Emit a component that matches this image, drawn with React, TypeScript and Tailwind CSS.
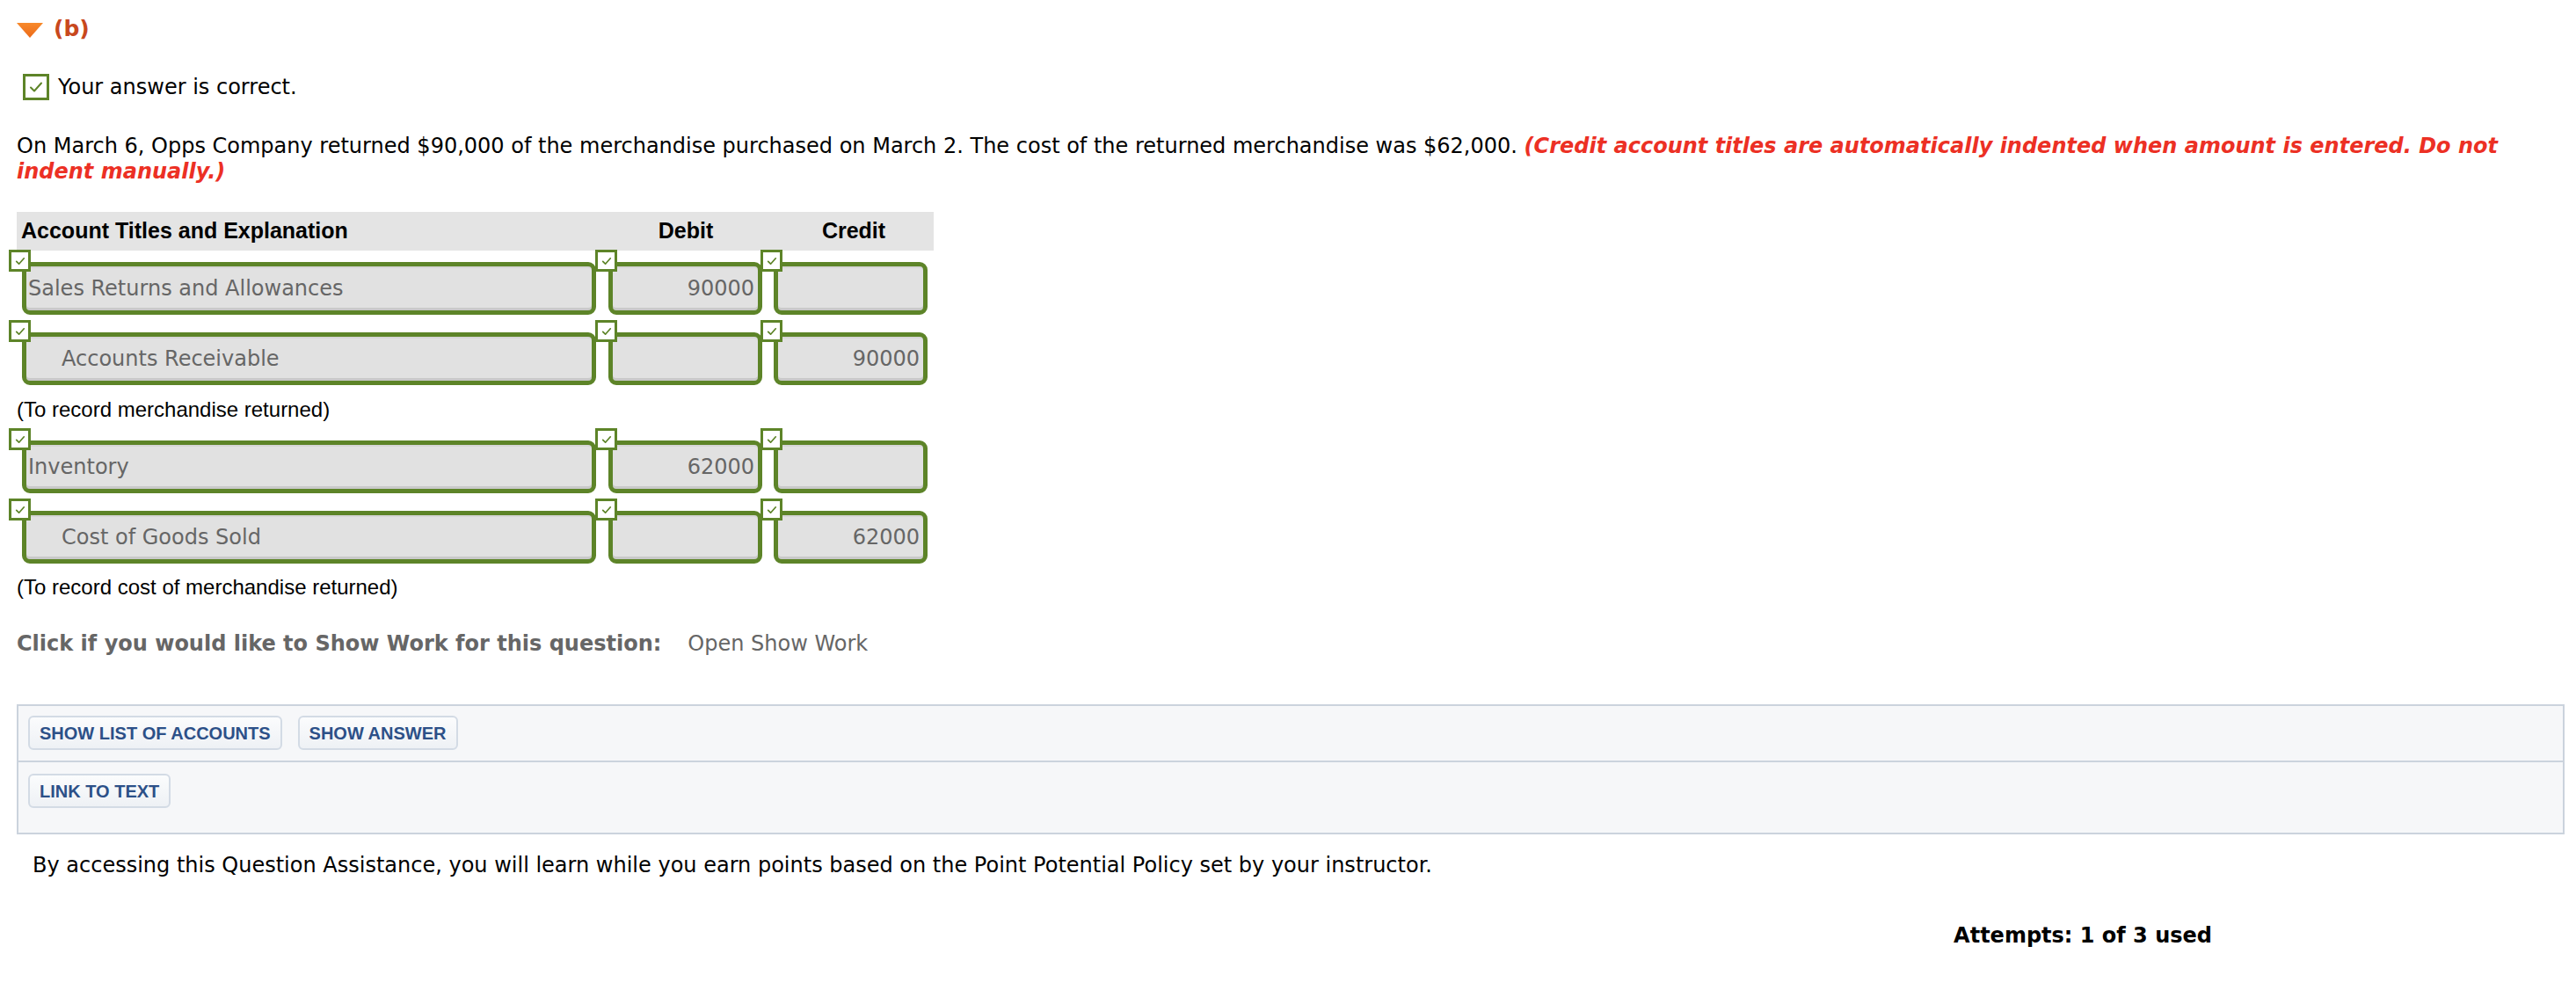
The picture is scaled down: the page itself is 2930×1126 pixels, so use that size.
import type { ReactNode } from "react";

const GREEN = "#5d8428";

function Check({ big = false }: { big?: boolean }) {
  return (
    <span
      className={
        big
          ? "flex h-[30px] w-[30px] items-center justify-center border-[3px] border-[#5d8428] bg-white"
          : "flex h-[25px] w-[25px] items-center justify-center border-[3px] border-[#5d8428] bg-white"
      }
    >
      <svg width={big ? 16 : 12} height={big ? 14 : 10} viewBox="0 0 16 14" fill="none">
        <path d="M2 7.5 L6 11.5 L14 2.5" stroke={GREEN} strokeWidth={big ? 2 : 2.4} strokeLinecap="round" strokeLinejoin="round" />
      </svg>
    </span>
  );
}

function Field({ width, children, align = "left", indent = false }: { width: string; children?: ReactNode; align?: "left" | "right"; indent?: boolean }) {
  return (
    <div className={`relative ${width}`}>
      <span className="absolute -left-[15px] -top-[14px] z-10">
        <Check />
      </span>
      <div
        className={`flex h-[60px] items-center rounded-[9px] border-[5px] border-[#5d8428] bg-[#e1e1e1] shadow-[inset_0_-3px_0_#c9c9c9,inset_0_2px_0_#d6d6d6] text-[24px] text-[#666] ${
          align === "right" ? "justify-end pr-[4px]" : indent ? "pl-[40px]" : "pl-[2px]"
        }`}
      >
        {children}
      </div>
    </div>
  );
}

function JournalRow({ account, debit, credit, first = false }: { account: string; debit?: string; credit?: string; first?: boolean }) {
  return (
    <div className={`flex pl-[6px] ${first ? "mt-[13px]" : "mt-[20px]"}`}>
      <Field width="w-[653px]" indent={!!credit}>
        {account}
      </Field>
      <div className="ml-[14px]">
        <Field width="w-[175px]" align="right">
          {debit}
        </Field>
      </div>
      <div className="ml-[13px]">
        <Field width="w-[175px]" align="right">
          {credit}
        </Field>
      </div>
    </div>
  );
}

function PanelButton({ children }: { children: ReactNode }) {
  return (
    <button className="h-[39px] rounded-[6px] border-2 border-[#d3dbe5] bg-gradient-to-b from-[#fbfcfd] to-[#eef1f5] px-[11px] font-['Liberation_Sans',sans-serif] text-[20px] font-bold text-[#2c5088]">
      {children}
    </button>
  );
}

export default function App() {
  return (
    <div className="min-h-screen bg-white pl-[19px] pr-[13px] pt-[18px] font-['DejaVu_Sans',sans-serif] text-black">
      <div className="flex h-[30px] items-center">
        <svg width="30" height="17" viewBox="0 0 30 17" className="mt-[2px]">
          <defs>
            <linearGradient id="tri" x1="0" y1="0" x2="0" y2="1">
              <stop offset="0" stopColor="#f7892a" />
              <stop offset="1" stopColor="#ec6a1a" />
            </linearGradient>
          </defs>
          <polygon points="0,0 30,0 15,17" fill="url(#tri)" />
        </svg>
        <span className="ml-[12px] text-[25px] font-bold text-[#c8481d]">(b)</span>
      </div>

      <div className="mt-[33px] flex items-center pl-[7px]">
        <Check big />
        <span className="ml-[10px] text-[24px]">Your answer is correct.</span>
      </div>

      <p className="mt-[35px] text-[24px] leading-[29px]">
        On March 6, Opps Company returned $90,000 of the merchandise purchased on March 2. The cost of the returned merchandise was $62,000.{" "}
        <span className="font-bold italic text-[#ec3024]">
          (Credit account titles are automatically indented when amount is entered. Do not indent manually.)
        </span>
      </p>

      <div className="mt-[31px] w-[1043px]">
        <div className="flex h-[44px] items-center bg-[#e4e4e4] font-['Liberation_Sans',sans-serif] text-[25px] font-bold">
          <div className="w-[661px] pl-[5px]">Account Titles and Explanation</div>
          <div className="w-[200px] text-center">Debit</div>
          <div className="w-[182px] text-center">Credit</div>
        </div>

        <JournalRow first account="Sales Returns and Allowances" debit="90000" />
        <JournalRow account="Accounts Receivable" credit="90000" />
        <div className="mt-[6px] h-[44px] font-['Liberation_Sans',sans-serif] text-[24px] leading-[44px]">(To record merchandise returned)</div>

        <JournalRow first account="Inventory" debit="62000" />
        <JournalRow account="Cost of Goods Sold" credit="62000" />
        <div className="mt-[6px] h-[42px] font-['Liberation_Sans',sans-serif] text-[24px] leading-[42px]">(To record cost of merchandise returned)</div>
      </div>

      <div className="mt-[28px] flex items-baseline leading-[30px]">
        <span className="text-[24px] font-bold text-[#666]">Click if you would like to Show Work for this question:</span>
        <span className="ml-[30px] text-[24px] text-[#666]">Open Show Work</span>
      </div>

      <div className="mt-[54px] border-2 border-[#cbd3dd] bg-[#f6f7f9]">
        <div className="flex gap-[18px] border-b-2 border-[#cbd3dd] px-[11px] pb-[12px] pt-[11px]">
          <PanelButton>SHOW LIST OF ACCOUNTS</PanelButton>
          <PanelButton>SHOW ANSWER</PanelButton>
        </div>
        <div className="px-[11px] pb-[28px] pt-[13px]">
          <PanelButton>LINK TO TEXT</PanelButton>
        </div>
      </div>

      <p className="mt-[20px] pl-[18px] text-[24px] leading-[30px]">
        By accessing this Question Assistance, you will learn while you earn points based on the Point Potential Policy set by your instructor.
      </p>

      <div className="mt-[50px] flex justify-end pr-[401px]">
        <span className="text-[24px] font-bold leading-[30px]">Attempts: 1 of 3 used</span>
      </div>
    </div>
  );
}
